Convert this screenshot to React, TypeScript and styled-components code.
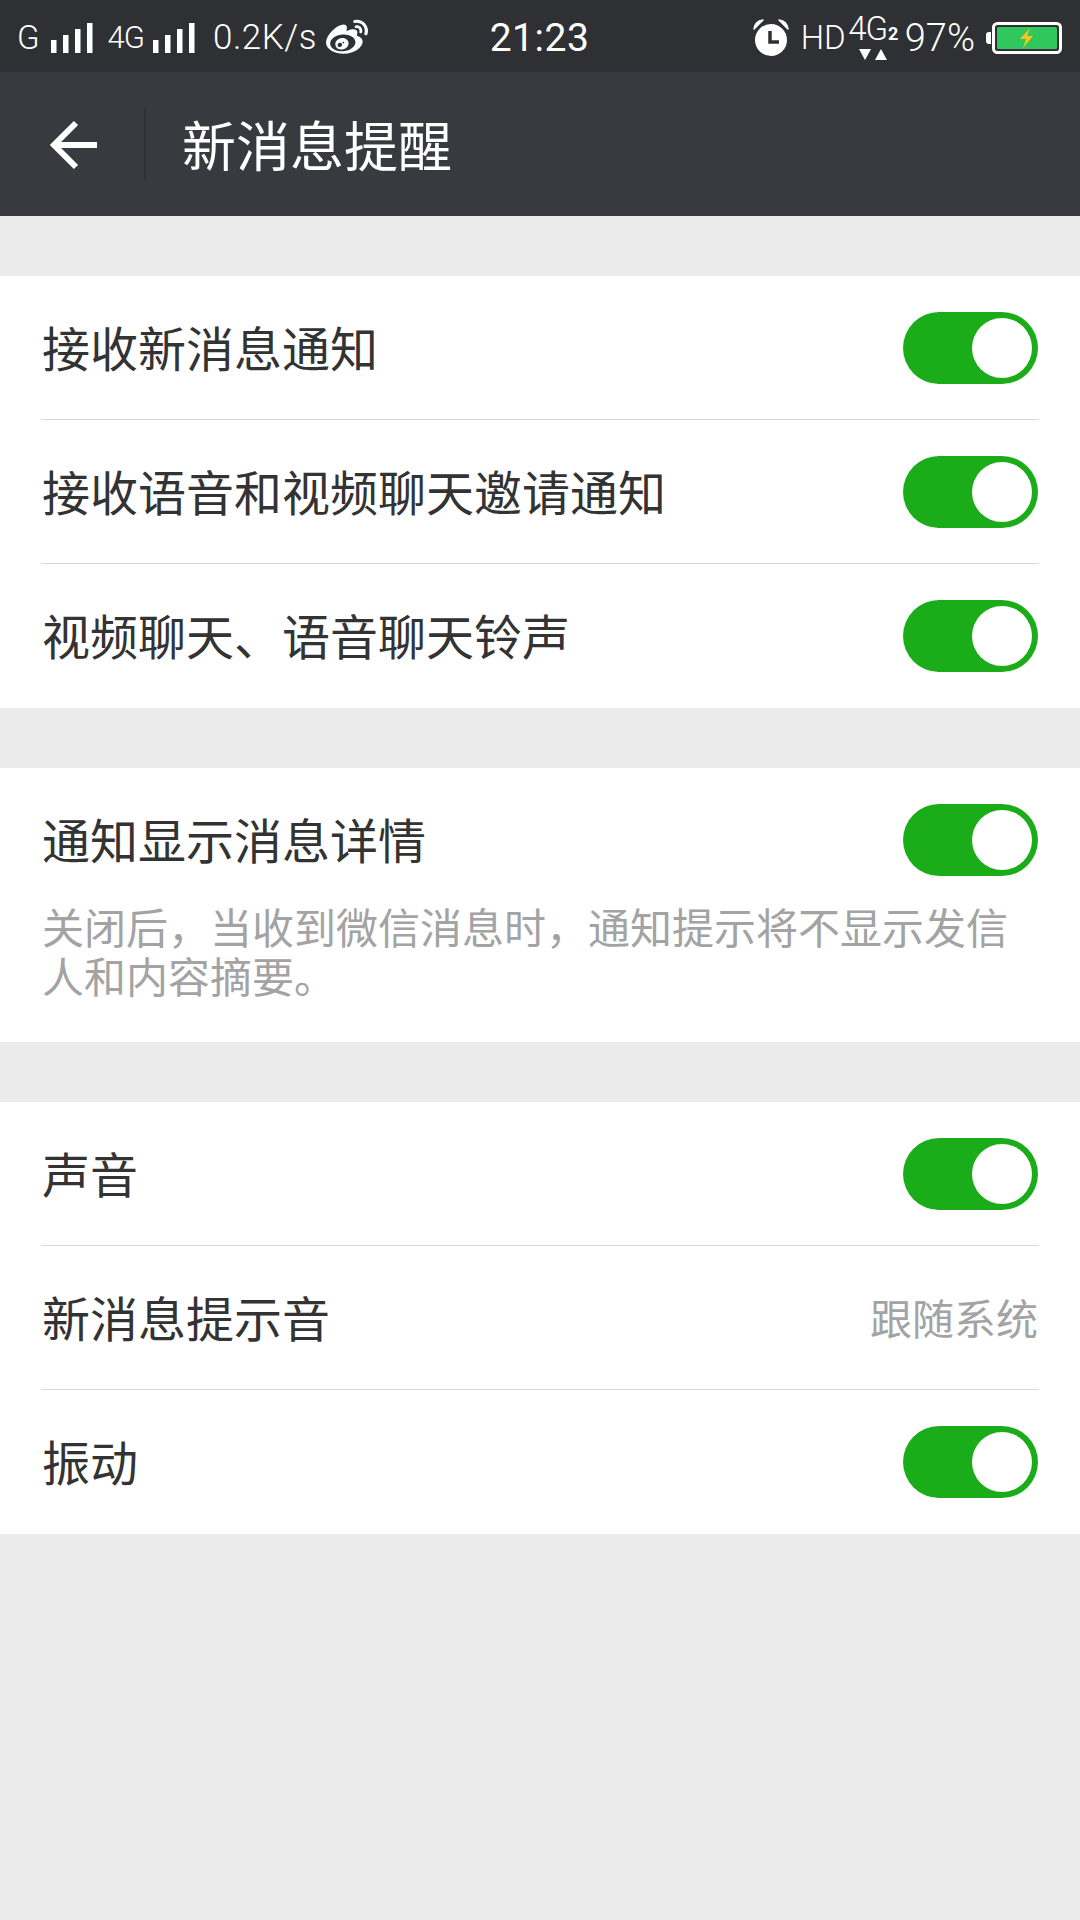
import styled, { createGlobalStyle } from "styled-components";
import { FaWeibo } from "react-icons/fa";

const GlobalStyle = createGlobalStyle`
  html, body {
    margin: 0;
    padding: 0;
    background: #ebebeb;
  }
  * {
    box-sizing: border-box;
  }
`;

const Page = styled.div`
  width: 1080px;
  height: 1920px;
  display: flex;
  flex-direction: column;
  background: #ebebeb;
  overflow: hidden;
  font-family: "Noto Sans CJK SC", "Noto Sans", sans-serif;
`;

const StatusBar = styled.div`
  height: 72px;
  flex: none;
  display: grid;
  grid-template-columns: 1fr auto 1fr;
  align-items: center;
  padding: 3px 18px 0 17px;
  background: #2e3033;
  color: #fff;
  font-family: Roboto, "Liberation Sans", sans-serif;
`;

const StatusLeft = styled.div`
  display: flex;
  align-items: center;
`;

const StatusRight = styled.div`
  display: flex;
  align-items: center;
  justify-content: flex-end;
`;

const StatusText = styled.span<{ $ml?: number; $size?: number; $ls?: number }>`
  margin-left: ${(p) => p.$ml ?? 0}px;
  font-size: ${(p) => p.$size ?? 31}px;
  letter-spacing: ${(p) => p.$ls ?? 0}px;
  line-height: 36px;
  font-weight: 300;
  white-space: nowrap;
`;

const Clock = styled.div`
  font-size: 39px;
  line-height: 44px;
  font-weight: 400;
  letter-spacing: 0.5px;
`;

const Bars = styled.svg<{ $ml: number }>`
  display: block;
  margin-left: ${(p) => p.$ml}px;
`;

const WeiboIcon = styled(FaWeibo)`
  display: block;
  margin-left: 9px;
  font-size: 42px;
`;

const NetStack = styled.div`
  width: 50px;
  margin-left: 2px;
  display: flex;
  flex-direction: column;
  align-items: center;
`;

const NetLabel = styled.div`
  display: flex;
  align-items: baseline;
  font-size: 33px;
  line-height: 28px;
  letter-spacing: -1px;
  font-weight: 300;
  small {
    font-size: 18px;
    font-weight: 700;
    margin-left: 1px;
  }
`;

const Arrows = styled.svg`
  display: block;
  margin-top: 1px;
`;

const BatteryWrap = styled.svg`
  display: block;
  margin-left: 11px;
`;

const AppBar = styled.header`
  height: 144px;
  flex: none;
  display: flex;
  align-items: center;
  background: #393a3f;
`;

const BackButton = styled.div`
  width: 144px;
  display: flex;
  justify-content: center;
  padding: 2px 0 0 3px;
`;

const BarDivider = styled.div`
  width: 2px;
  height: 72px;
  background: #2f3034;
`;

const Title = styled.h1`
  margin: 0 0 0 36px;
  color: #fff;
  font-size: 54px;
  line-height: 72px;
  font-weight: 400;
`;

const Group = styled.section`
  margin-top: 60px;
  background: #fff;
`;

const Row = styled.div<{ $divided?: boolean }>`
  height: 144px;
  margin: 0 41px;
  display: flex;
  align-items: center;
  justify-content: space-between;
  box-shadow: ${(p) => (p.$divided ? "0 -1px 0 #d9d9d9" : "none")};
`;

const Label = styled.div`
  color: #333;
  font-size: 48px;
  line-height: 60px;
  margin-left: 1px;
  padding-bottom: 5px;
`;

const Value = styled.div`
  color: #a3a3a3;
  font-size: 42px;
  line-height: 56px;
  margin-right: 1px;
  padding-bottom: 2px;
`;

const Toggle = styled.div`
  width: 135px;
  height: 72px;
  margin-right: 1px;
  padding: 6px;
  display: flex;
  justify-content: flex-end;
  border-radius: 36px;
  background: #1aad19;
  &::after {
    content: "";
    width: 60px;
    height: 60px;
    border-radius: 50%;
    background: #fff;
  }
`;

const Hint = styled.p`
  margin: -11px 41px 0 42px;
  padding-bottom: 43px;
  color: #a3a3a3;
  font-size: 42px;
  line-height: 49px;
`;

function SignalBars({ ml }: { ml: number }) {
  return (
    <Bars $ml={ml} width="42" height="30" viewBox="0 0 42 30" fill="#fff">
      <rect x="0" y="17" width="5.5" height="13" />
      <rect x="12" y="12" width="5.5" height="18" />
      <rect x="24" y="6" width="5.5" height="24" />
      <rect x="36" y="0" width="5.5" height="30" />
    </Bars>
  );
}

function AlarmIcon() {
  return (
    <svg width="36" height="38" viewBox="0 0 36 38" style={{ display: "block" }}>
      <path d="M1 10 Q2 2 10 1 Z M35 10 Q34 2 26 1 Z" fill="#fff" stroke="#fff" strokeWidth="1.5" strokeLinejoin="round" />
      <circle cx="18" cy="21" r="16" fill="#fff" />
      <path d="M17 12 V23 H26" fill="none" stroke="#2e3033" strokeWidth="3.5" />
    </svg>
  );
}

function Battery() {
  return (
    <BatteryWrap width="76" height="32" viewBox="0 0 76 32">
      <path d="M5 10 H3 Q0 10 0 13 V19 Q0 22 3 22 H5 Z" fill="#fff" />
      <rect x="7.5" y="1.5" width="67" height="29" rx="4" fill="none" stroke="#fff" strokeWidth="3" />
      <rect x="11" y="5" width="60" height="22" rx="1.5" fill="#30c85c" />
      <path d="M44 6 L34 17 H40 L37 26 L47 14 H41 Z" fill="#f2c71b" />
    </BatteryWrap>
  );
}

function App() {
  return (
    <Page>
      <GlobalStyle />
      <StatusBar>
        <StatusLeft>
          <StatusText $size={33}>G</StatusText>
          <SignalBars ml={11} />
          <StatusText $ml={15} $ls={-1}>4G</StatusText>
          <SignalBars ml={9} />
          <StatusText $ml={18} $size={35} $ls={0.5}>0.2K/s</StatusText>
          <WeiboIcon />
        </StatusLeft>
        <Clock>21:23</Clock>
        <StatusRight>
          <AlarmIcon />
          <StatusText $ml={12} $size={33}>HD</StatusText>
          <NetStack>
            <NetLabel>
              4G<small>2</small>
            </NetLabel>
            <Arrows width="30" height="11" viewBox="0 0 30 11" fill="#fff">
              <path d="M1 0 H13 L7 11 Z M17 11 H29 L23 0 Z" />
            </Arrows>
          </NetStack>
          <StatusText $ml={7} $size={38}>97%</StatusText>
          <Battery />
        </StatusRight>
      </StatusBar>

      <AppBar>
        <BackButton>
          <svg width="50" height="50" viewBox="0 0 50 50" fill="none" stroke="#fff" strokeWidth="6">
            <path d="M48 25 H5 M27 3 L5 25 L27 47" />
          </svg>
        </BackButton>
        <BarDivider />
        <Title>新消息提醒</Title>
      </AppBar>

      <Group>
        <Row>
          <Label>接收新消息通知</Label>
          <Toggle />
        </Row>
        <Row $divided>
          <Label>接收语音和视频聊天邀请通知</Label>
          <Toggle />
        </Row>
        <Row $divided>
          <Label>视频聊天、语音聊天铃声</Label>
          <Toggle />
        </Row>
      </Group>

      <Group>
        <Row>
          <Label>通知显示消息详情</Label>
          <Toggle />
        </Row>
        <Hint>关闭后，当收到微信消息时，通知提示将不显示发信人和内容摘要。</Hint>
      </Group>

      <Group>
        <Row>
          <Label>声音</Label>
          <Toggle />
        </Row>
        <Row $divided>
          <Label>新消息提示音</Label>
          <Value>跟随系统</Value>
        </Row>
        <Row $divided>
          <Label>振动</Label>
          <Toggle />
        </Row>
      </Group>
    </Page>
  );
}

export default App;
